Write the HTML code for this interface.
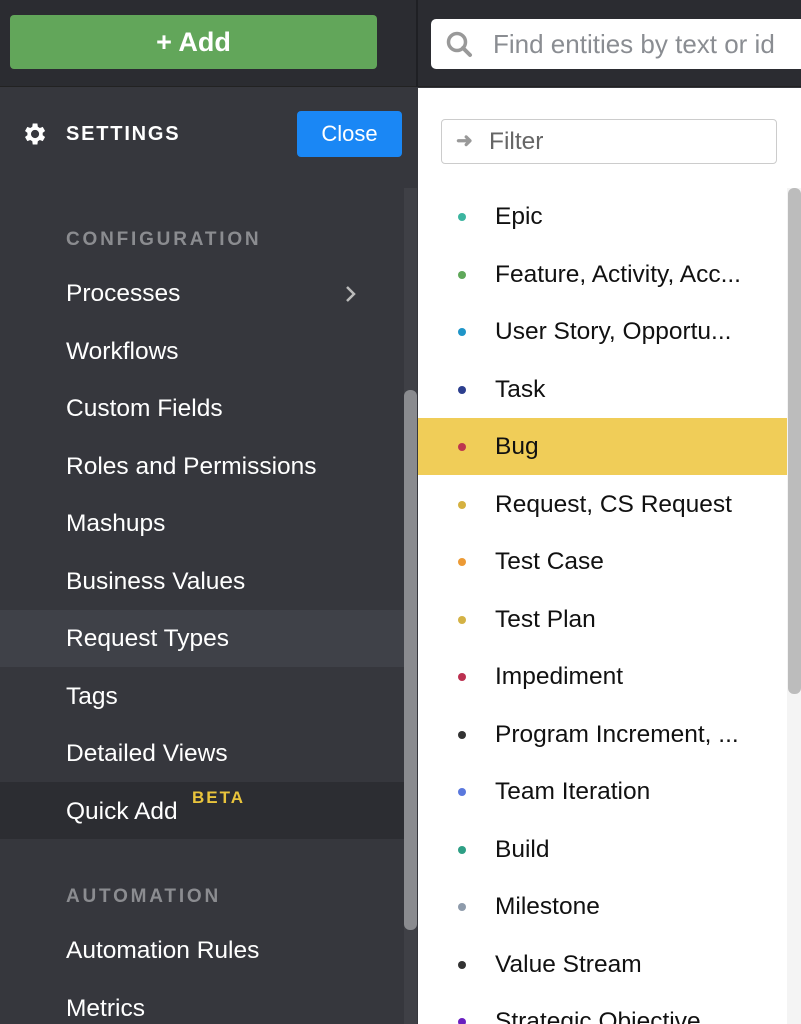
<!DOCTYPE html>
<html style="width:801px;height:1024px;overflow:hidden"><head><meta charset="utf-8"><style>
*{margin:0;padding:0;box-sizing:border-box}
body{width:801px;height:1024px;overflow:hidden;background:#36373d;font-family:"Liberation Sans",sans-serif;position:relative}
.abs{position:absolute}
.top{left:0;top:0;width:801px;height:87px;background:#2b2c31;border-bottom:1px solid #222}
.add{left:10px;top:15px;width:367px;height:54px;background:#62a65a;border-radius:4px;color:#fff;font-size:27px;font-weight:bold;text-align:center;line-height:54px}
.search{left:431px;top:19px;width:380px;height:50px;background:#fff;border-radius:5px}
.search span{position:absolute;left:62px;top:10px;font-size:26px;color:#8a8d92}
.vline{left:416px;top:0;width:2px;height:87px;background:#1f2024}
.li{left:66px;color:#fff;font-size:24.5px;height:57.5px;line-height:57.5px;white-space:nowrap}
.row{left:0;width:404px;height:57px}
.sec{left:66px;color:#8b8c90;font-size:19px;font-weight:bold;letter-spacing:2.8px}
.right{left:418px;top:88px;width:383px;height:936px;background:#fff}
.ri{left:495px;color:#111;font-size:24.5px;height:57.5px;line-height:57.5px;white-space:nowrap}
.dot{left:458px;width:8px;height:8px;border-radius:50%}
</style></head><body>
<div class="abs top"></div>
<div class="abs vline"></div>
<div class="abs add">+ Add</div>
<div class="abs search">
<svg class="abs" style="left:15px;top:12px" width="28" height="28" viewBox="0 0 28 28"><circle cx="11" cy="11" r="8.5" fill="none" stroke="#999" stroke-width="3.5"/><line x1="17" y1="17" x2="24" y2="24" stroke="#999" stroke-width="4" stroke-linecap="round"/></svg>
<span>Find entities by text or id</span></div>

<svg class="abs" style="left:20px;top:120px" width="28" height="28" viewBox="0 0 24 24"><path fill="#fff" d="M19.4 13a7.5 7.5 0 000-2l2.1-1.6-2-3.5-2.5 1a7.3 7.3 0 00-1.7-1L14.9 3h-4l-.4 2.9a7.3 7.3 0 00-1.7 1l-2.5-1-2 3.5L6.4 11a7.5 7.5 0 000 2l-2.1 1.6 2 3.5 2.5-1a7.3 7.3 0 001.7 1l.4 2.9h4l.4-2.9a7.3 7.3 0 001.7-1l2.5 1 2-3.5zM12.9 15.5a3.5 3.5 0 110-7 3.5 3.5 0 010 7z"/></svg>
<div class="abs" style="left:66px;top:123px;color:#fff;font-size:20px;font-weight:bold;letter-spacing:1.8px">SETTINGS</div>
<div class="abs" style="left:297px;top:111px;width:105px;height:46px;background:#1a87f5;border-radius:4px;color:#fff;font-size:22px;text-align:center;line-height:46px">Close</div>

<div class="abs" style="left:404px;top:188px;width:13px;height:836px;background:#3f4046"></div>
<div class="abs" style="left:404px;top:390px;width:13px;height:540px;background:#8a8b8f;border-radius:6px"></div>

<div class="abs sec" style="top:229px">CONFIGURATION</div>
<div class="abs row" style="top:610px;background:#3f4148"></div>
<div class="abs row" style="top:782px;background:#2c2d32"></div>
<div class="abs li" style="top:265px">Processes</div>
<svg class="abs" style="left:345px;top:286px" width="12" height="16" viewBox="0 0 12 16"><path d="M2 1l7 7-7 7" fill="none" stroke="#bbb" stroke-width="2.5"/></svg>
<div class="abs li" style="top:323px">Workflows</div>
<div class="abs li" style="top:380px">Custom Fields</div>
<div class="abs li" style="top:438px">Roles and Permissions</div>
<div class="abs li" style="top:495px">Mashups</div>
<div class="abs li" style="top:553px">Business Values</div>
<div class="abs li" style="top:610px">Request Types</div>
<div class="abs li" style="top:668px">Tags</div>
<div class="abs li" style="top:725px">Detailed Views</div>
<div class="abs li" style="top:783px">Quick Add</div>
<div class="abs" style="left:192px;top:788px;color:#e9c43c;font-size:17px;font-weight:bold;letter-spacing:2px">BETA</div>
<div class="abs sec" style="top:886px">AUTOMATION</div>
<div class="abs li" style="top:922px">Automation Rules</div>
<div class="abs li" style="top:980px">Metrics</div>

<div class="abs right"></div>
<div class="abs" style="left:441px;top:119px;width:336px;height:45px;border:1px solid #ccc;border-radius:4px;background:#fff">
<span class="abs" style="left:14px;top:8px;color:#999;font-size:20px;font-weight:bold">&#10140;</span>
<span class="abs" style="left:47px;top:8px;color:#666;font-size:24.5px">Filter</span></div>
<div class="abs" style="left:787px;top:188px;width:14px;height:836px;background:#f4f4f4"></div>
<div class="abs" style="left:788px;top:188px;width:13px;height:506px;background:#bcbcbc;border-radius:6px"></div>
<div class="abs" style="left:418px;top:418px;width:369px;height:57px;background:#f0cd58"></div>

<div class="abs dot" style="top:213px;background:#3cb5a0"></div><div class="abs ri" style="top:188px">Epic</div>
<div class="abs dot" style="top:271px;background:#5fa85a"></div><div class="abs ri" style="top:246px">Feature, Activity, Acc...</div>
<div class="abs dot" style="top:328px;background:#1f95c8"></div><div class="abs ri" style="top:303px">User Story, Opportu...</div>
<div class="abs dot" style="top:386px;background:#2c3f8e"></div><div class="abs ri" style="top:361px">Task</div>
<div class="abs dot" style="top:443px;background:#bd364f"></div><div class="abs ri" style="top:418px">Bug</div>
<div class="abs dot" style="top:501px;background:#d5b140"></div><div class="abs ri" style="top:476px">Request, CS Request</div>
<div class="abs dot" style="top:558px;background:#ec9a35"></div><div class="abs ri" style="top:533px">Test Case</div>
<div class="abs dot" style="top:616px;background:#d4b245"></div><div class="abs ri" style="top:591px">Test Plan</div>
<div class="abs dot" style="top:673px;background:#bc3050"></div><div class="abs ri" style="top:648px">Impediment</div>
<div class="abs dot" style="top:731px;background:#333"></div><div class="abs ri" style="top:706px">Program Increment, ...</div>
<div class="abs dot" style="top:788px;background:#5a78dd"></div><div class="abs ri" style="top:763px">Team Iteration</div>
<div class="abs dot" style="top:846px;background:#2e9f85"></div><div class="abs ri" style="top:821px">Build</div>
<div class="abs dot" style="top:903px;background:#8e9bab"></div><div class="abs ri" style="top:878px">Milestone</div>
<div class="abs dot" style="top:961px;background:#333"></div><div class="abs ri" style="top:936px">Value Stream</div>
<div class="abs dot" style="top:1018px;background:#6a1fc0"></div><div class="abs ri" style="top:993px">Strategic Objective</div>
</body></html>
